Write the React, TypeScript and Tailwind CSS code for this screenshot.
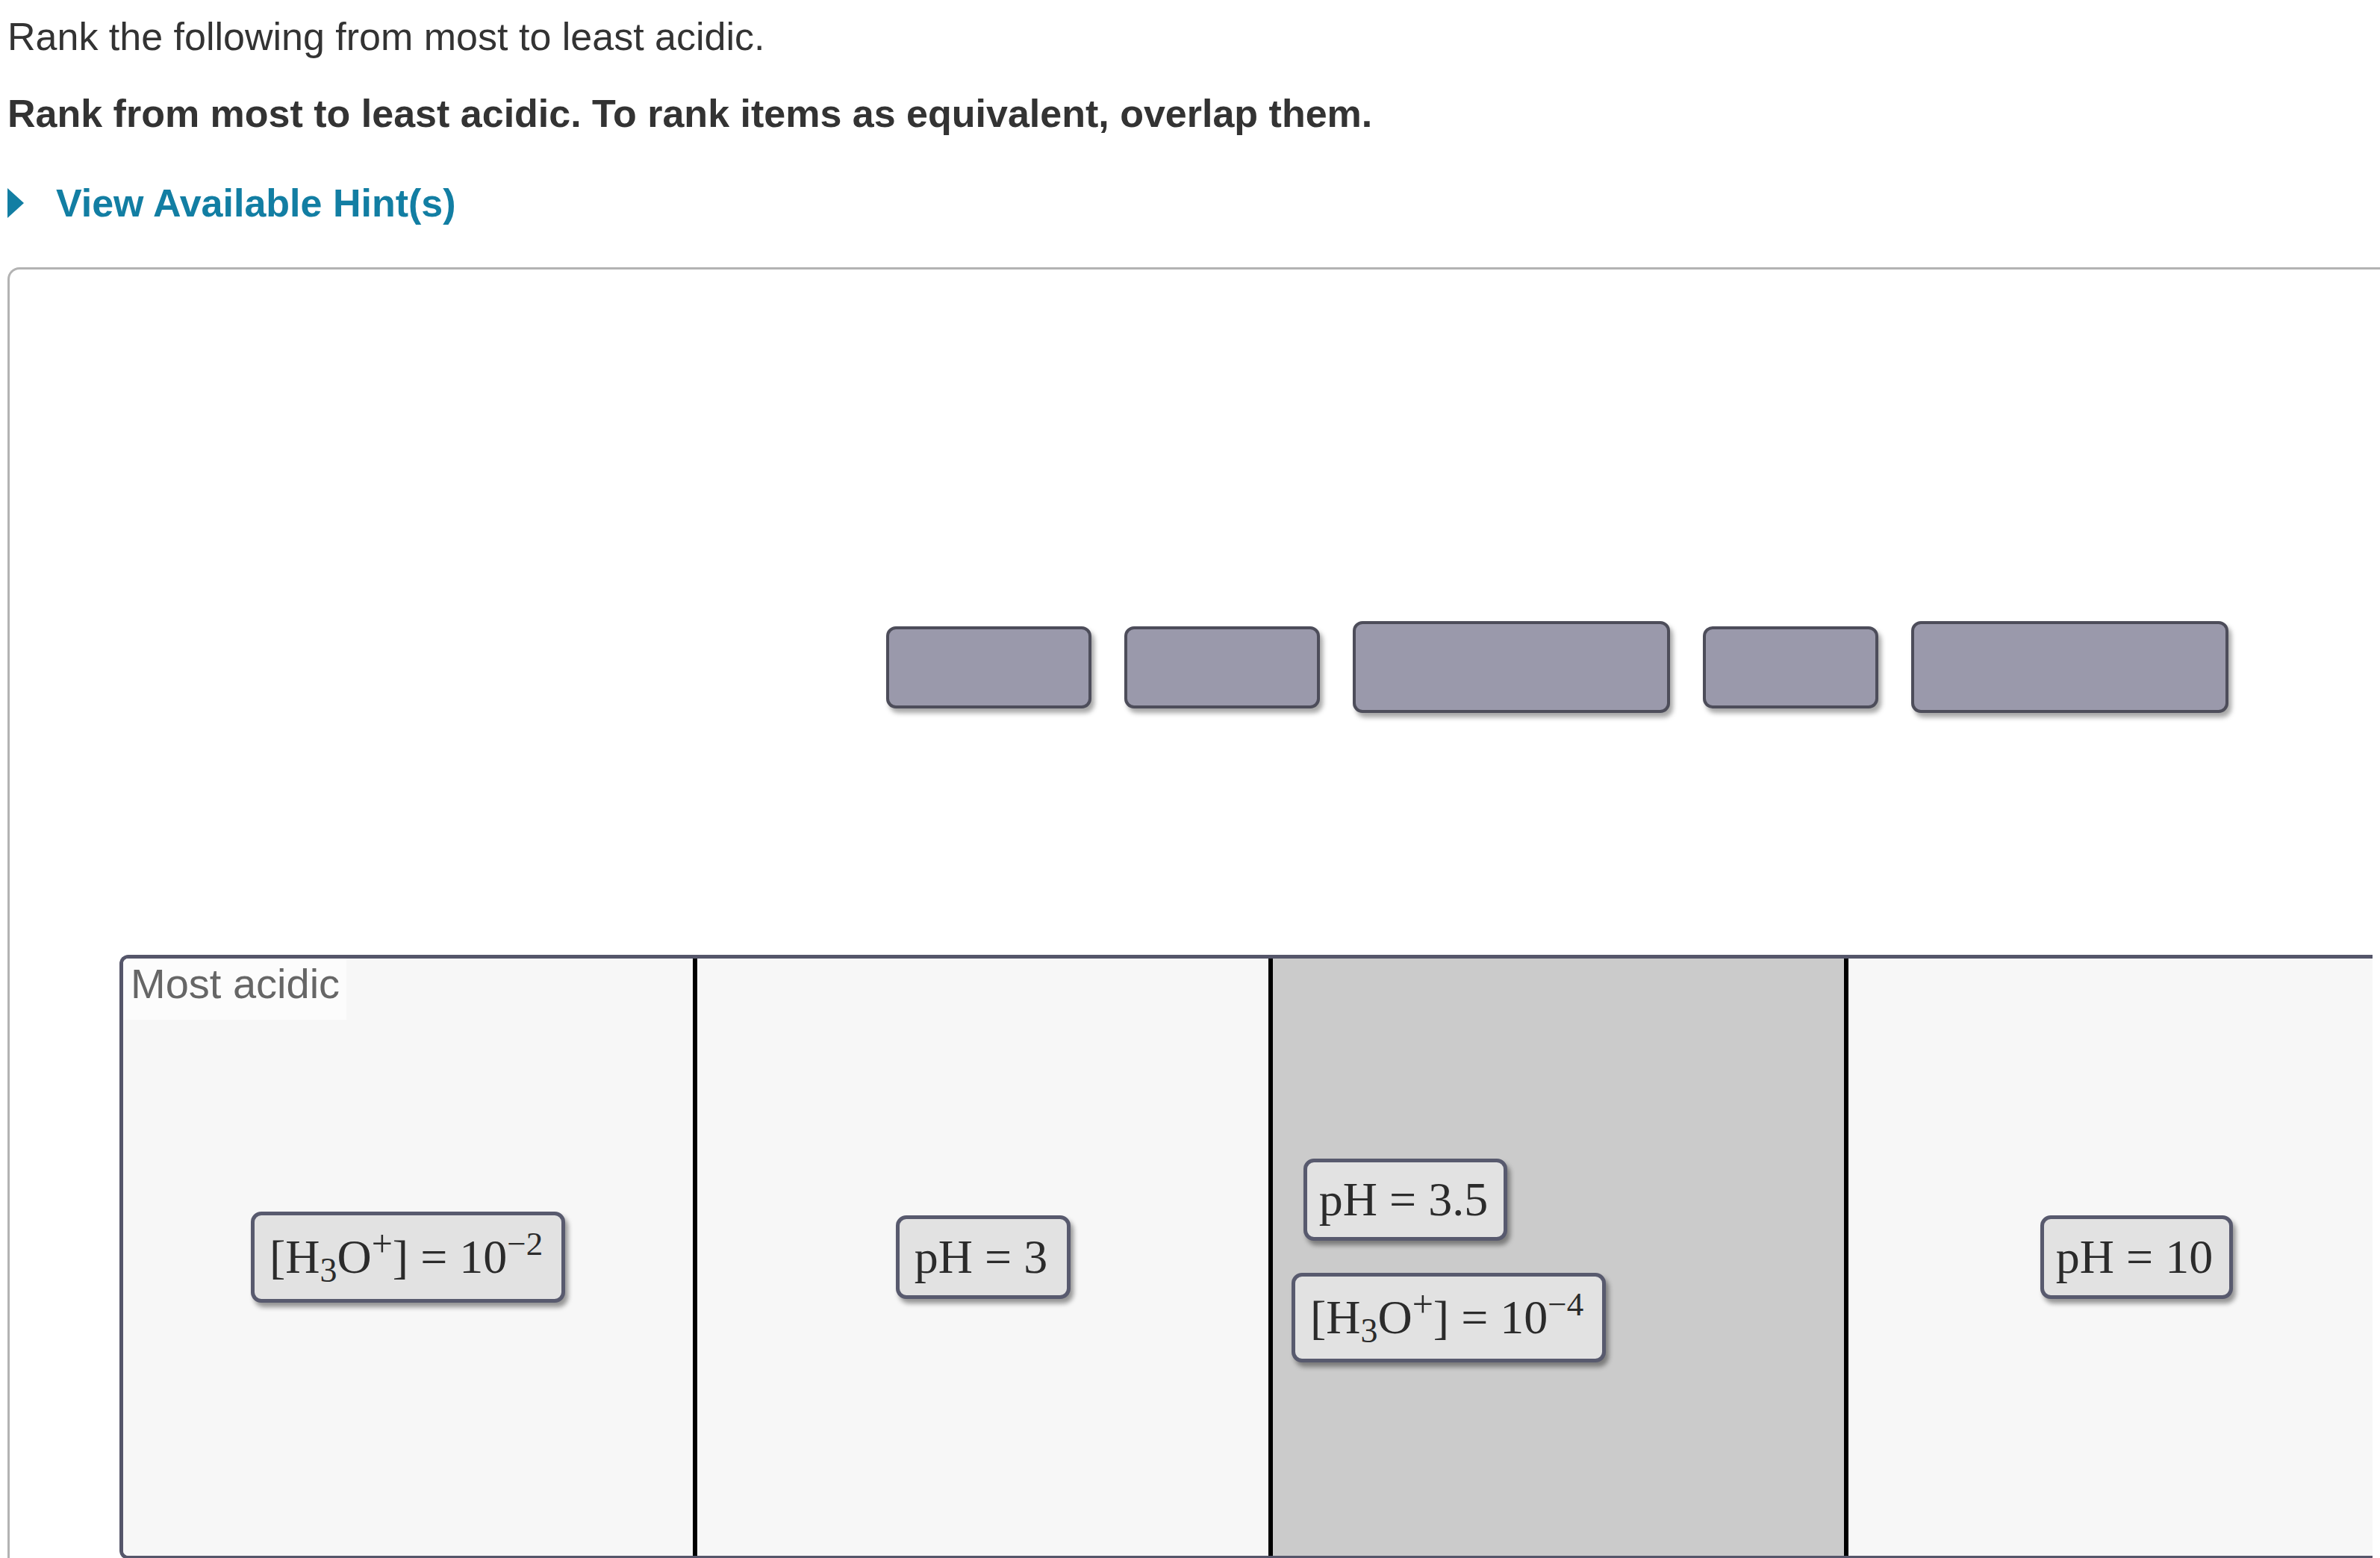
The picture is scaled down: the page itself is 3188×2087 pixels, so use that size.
import React from "react";

const Slot = ({ w, h }: { w: number; h: number }) => (
  <div
    className="shrink-0 rounded-[13px] border-[4px] border-[#4d4d5a] bg-[#9a99ab] shadow-[4px_6px_6px_rgba(0,0,0,0.35)]"
    style={{ width: w, height: h }}
  />
);

const Card = ({ w, h, children, className = "" }: { w: number; h: number; children: React.ReactNode; className?: string }) => (
  <div
    className={
      "shrink-0 flex items-center justify-center rounded-[14px] border-[5px] border-[#585a6e] bg-[#e2e2e2] shadow-[4px_6px_6px_rgba(0,0,0,0.4)] font-['Liberation_Serif','Times_New_Roman',serif] text-[64px] leading-none text-[#2b2b2b] pr-[5px] " +
      className
    }
    style={{ width: w, height: h }}
  >
    {children}
  </div>
);

const H3O = ({ exp }: { exp: string }) => (
  <span className="whitespace-nowrap">
    [H<span className="inline-block text-[46px] translate-y-[12px]">3</span>O
    <span className="inline-block text-[50px] -translate-y-[22px]">+</span>] = 10
    <span className="inline-block text-[45px] -translate-y-[24px]">−{exp}</span>
  </span>
);

export default function App() {
  return (
    <div className="w-[3188px] h-[2087px] overflow-hidden bg-white text-[#333] font-['Liberation_Sans',Arial,sans-serif]">
      <p className="pl-[10px] pt-[13px] text-[52px] leading-[72px]">
        Rank the following from most to least acidic.
      </p>
      <p className="pl-[10px] mt-[31px] text-[52px] leading-[72px] font-bold">
        Rank from most to least acidic. To rank items as equivalent, overlap them.
      </p>
      <div className="mt-[48px] flex items-center pl-[10px] h-[72px]">
        <svg width="22" height="40" viewBox="0 0 22 40" className="shrink-0">
          <polygon points="0,0 22,20 0,40" fill="#127ea3" />
        </svg>
        <span className="ml-[43px] text-[52px] font-bold text-[#127ea3]">View Available Hint(s)</span>
      </div>

      <div className="ml-[10px] mt-[50px] h-[1800px] border-l-[3px] border-t-[3px] border-[#b3b3b3] rounded-tl-[16px] flex flex-col">
        <div className="flex items-center gap-[44px] pl-[1174px] pt-[471px]">
          <Slot w={275} h={110} />
          <Slot w={262} h={110} />
          <Slot w={425} h={123} />
          <Slot w={235} h={110} />
          <Slot w={425} h={123} />
        </div>

        <div className="ml-[147px] mt-[324px] w-[3018px] shrink-0 h-[810px] flex overflow-hidden border-l-[5px] border-t-[5px] border-b-[5px] border-[#55566a] rounded-l-[12px]">
          <div className="relative shrink-0 w-[769px] h-full bg-[#f7f7f7] border-r-[6px] border-black flex items-center justify-center">
            <div className="absolute left-0 top-0 w-[299px] h-[82px] bg-[#fcfcfc] pl-[10px] text-[56px] leading-[68px] text-[#666]">
              Most acidic
            </div>
            <Card w={421} h={122}>
              <H3O exp="2" />
            </Card>
          </div>
          <div className="shrink-0 w-[771px] h-full bg-[#f7f7f7] border-r-[6px] border-black flex items-center justify-center">
            <Card w={234} h={112}>pH = 3</Card>
          </div>
          <div className="shrink-0 w-[771px] h-full bg-[#cbcbcb] border-r-[6px] border-black flex flex-col justify-center items-start gap-[43px] pl-[25px] pt-[8px]">
            <Card w={273} h={110} className="ml-[16px]">pH = 3.5</Card>
            <Card w={421} h={120}>
              <H3O exp="4" />
            </Card>
          </div>
          <div className="shrink-0 w-[771px] h-full bg-[#f7f7f7] flex items-center justify-center">
            <Card w={258} h={112}>pH = 10</Card>
          </div>
        </div>
      </div>
    </div>
  );
}
